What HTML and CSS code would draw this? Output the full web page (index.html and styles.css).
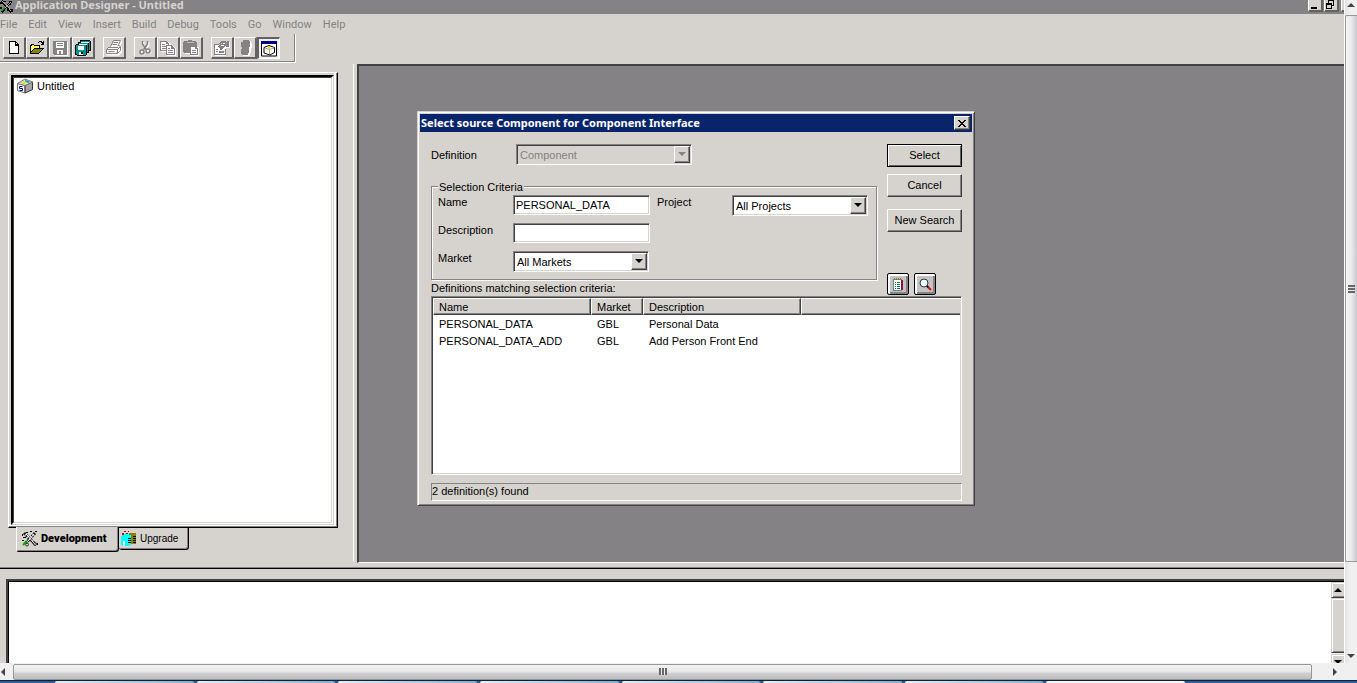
FILE: index.html
```html
<!DOCTYPE html>
<html lang="en">
<head>
    <meta charset="UTF-8">
    <meta name="viewport" content="width=device-width, initial-scale=1.0">
    <title>Application Designer - Untitled</title>
    <link rel="stylesheet" href="styles.css">
</head>
<body>
    <div class="app">
        <header class="titlebar">
            <svg class="app-icon" viewBox="0 0 16 14" width="13" height="14" shape-rendering="crispEdges">
                <path d="M0 1h3v2H0zM4 0h3v1H4zM11 0h4v2h-2v3h-2zM0 7h2v2H0zM1 11h3v2H1zM9 9h2v3H9zM13 10h3v3h-3z" fill="#000"/>
                <path d="M2 0L14 13M14 0L2 13" stroke="#000" stroke-width="3"/>
                <path d="M3 0L14 12M13 1L5 10" stroke="#d6d3ce" stroke-width="1"/>
                <path d="M2 12l4-4" stroke="#00a000" stroke-width="2"/>
            </svg>
            <h1>Application Designer - Untitled</h1>
            <div class="window-buttons">
                <button type="button" aria-label="Minimize"><svg viewBox="0 0 14 11" width="14" height="11" shape-rendering="crispEdges"><path d="M3 7h6v2H3z"/></svg></button>
                <button type="button" aria-label="Restore"><svg viewBox="0 0 14 11" width="14" height="11" shape-rendering="crispEdges"><path d="M4 0h6v6H8V5h1V1H5v2H4zM2 3h6v6H2zM3 5v3h4V5z" fill-rule="evenodd"/></svg></button>
                <button type="button" class="cut" aria-label="Close"></button>
            </div>
        </header>

        <nav class="menubar">
            <a href="#">File</a>
            <a href="#">Edit</a>
            <a href="#">View</a>
            <a href="#">Insert</a>
            <a href="#">Build</a>
            <a href="#">Debug</a>
            <a href="#">Tools</a>
            <a href="#">Go</a>
            <a href="#">Window</a>
            <a href="#">Help</a>
        </nav>

        <div class="toolbar">
            <div class="tool-group">
                <button type="button" aria-label="New"><svg viewBox="0 0 16 16" shape-rendering="crispEdges"><path d="M3 1h7v1h1v1h1v1h1v10H3z"/><path d="M4 2h5v4h3v7H4zM10 3h1v1h-1z" fill="#fff"/></svg></button>
                <button type="button" aria-label="Open"><svg viewBox="0 0 16 16" shape-rendering="crispEdges"><path d="M1 5h1V4h3v1h6v3h4v1h-1v1h-1v1h-1v1h-1v1h-1v1H1zM9 2h1V1h3v1h1V1h1v4h-3V4h1V3h-1V2h-2v1H9z"/><path d="M2 6h1V5h2v1h5v2H5v1H4v1H3v1H2z" fill="#ff6"/><path d="M5 9h8v1h-1v1h-1v1h-1v1H2v-1h1v-1h1v-1h1z" fill="#848200"/></svg></button>
                <button type="button" aria-label="Save" disabled><svg viewBox="0 0 16 16" shape-rendering="crispEdges"><path d="M2 2h14v14H3v-1H2z" fill="#fff"/><path d="M1 1h14v14H2v-1H1z" fill="#848284"/><path d="M4 2h8v6H4zM5 10h6v4H9v-3H7v3H5z" fill="#fff"/><path d="M5 3h6v1H5zM5 5h6v1H5z" fill="#848284"/></svg></button>
                <button type="button" aria-label="Save All"><svg viewBox="0 0 16 16" shape-rendering="crispEdges"><path d="M5 0h10v1h1v10h-2v2h-2v2h-1v1H2v-1H0V5h1V4h2V2h2z"/><path d="M6 1h9v9h-1V2H6zM4 3h9v9h-1V4H4zM1 5h10v10H2v-1H1z" fill="#009294"/><path d="M6 2h8v1H6zM4 4h8v1H4z" fill="#fff"/><path d="M3 6h6v4H3zM4 12h4v3H4z" fill="#fff"/><path d="M6 12h2v2H6z"/></svg></button>
            </div>
            <div class="tool-group">
                <button type="button" aria-label="Print" disabled><svg viewBox="0 0 16 16" fill="none"><path d="M5.500 7.500L8.500 1.500H15.500L13 7M3 8L1.500 10.500V14.500H12.500L15.500 11.500V7.500L12.500 6.500M1.500 10.500H12.500V14M12.500 10.500L15 8M3.500 12.500H9.500M8.500 3.500H13M7.500 5.500H12M3 8.500H12" stroke="#fff" stroke-width="2"/><path d="M4.500 6.500L7.500 .5H14.500L12 6M3 7L.5 9.500V13.500H11.500L14.500 10.500V6.500L12.500 5.500M.5 9.500H11.500V13M11.500 9.500L14 7M2.500 11.500H8.500M7.500 2.500H12M6.500 4.500H11M3 7.500H12" stroke="#848284"/></svg></button>
            </div>
            <div class="tool-group">
                <button type="button" aria-label="Cut" disabled><svg viewBox="0 0 16 16" fill="none"><path d="M6.500 2v3l4 6M11.500 2v3l-4 6" stroke="#fff" stroke-width="2"/><circle cx="6" cy="13" r="2" stroke="#fff"/><circle cx="12" cy="12" r="2" stroke="#fff"/><path d="M5.500 1v3l4 6M10.500 1v3l-4 6" stroke="#848284" stroke-width="1.500"/><circle cx="5" cy="12" r="2" stroke="#848284" stroke-width="1.500"/><circle cx="11" cy="11" r="2" stroke="#848284" stroke-width="1.500"/></svg></button>
                <button type="button" aria-label="Copy" disabled><svg viewBox="0 0 16 16" shape-rendering="crispEdges"><path d="M1 2h7l3 3v7H1zM7 6h6l3 3v7H7z" fill="#fff"/><path d="M0 1h6v1H1v8h5v1H0zM6 1h1v1h1v1h1v2H8V4H6zM2 4h3v1H2zM2 6h4v1H2zM2 8h4v1H2zM6 5h6v1H7v8h7V9h-3V5h1v1h1v1h1v1h1v7H6zM8 8h2v1H8zM8 10h5v1H8zM8 12h5v1H8z" fill="#848284"/></svg></button>
                <button type="button" aria-label="Paste" disabled><svg viewBox="0 0 16 16" shape-rendering="crispEdges"><path d="M2 3h12v4h2v9H7v-2H2z" fill="#fff"/><path d="M5 0h4v1h4v1h1v5H7v6H1V12H0V2h1V1h4z" fill="#848284"/><path d="M4 2h7v1H4z" fill="#bbb"/><path d="M7 6h6v1h1v1h1v7H7zM8 7v7h6V9h-2V7zM9 10h4v1H9zM9 12h4v1H9z" fill="#848284" fill-rule="evenodd"/></svg></button>
            </div>
            <div class="tool-group">
                <button type="button" aria-label="Properties" disabled><svg viewBox="0 0 16 16" shape-rendering="crispEdges"><path d="M1 5h11v11H1zM8 2h8v6H8z" fill="#fff"/><path d="M0 4h5v1H1v9h10V9h1v6H0zM5 3h1V2h1V1h5v1h1V1h2v6h-3V6h-1v1h-1v1H9v1H8v1H6V8H5V7H4V6h1V5h1V4H5zM7 3h1v1H7zM9 3h2v1H9zM7 5h3v1H7zM2 9h2v1H2zM2 11h2v1H2zM5 11h5v1H5zM5 13h5v-1H5z" fill="#848284" fill-rule="evenodd"/></svg></button>
                <button type="button" aria-label="Stop" disabled><svg viewBox="0 0 16 16" shape-rendering="crispEdges"><path d="M7 1h7v2h1v5h-1v5h-1v3H6v-2h1z" fill="#fff"/><path d="M6 0h6v1h1v6h-1v6h-1v2H5v-1H4V9h1V7H4V2h2z" fill="#848284"/></svg></button>
                <button type="button" class="pressed" aria-label="Project Workspace"><svg viewBox="0 0 16 16"><path d="M.5 .5h15v14.500H.5z" fill="#fff" stroke="#000"/><path d="M0 0h16v3H0z" fill="#000084"/><path d="M3 6.500l5-2 5.500 2v5L9 14l-6-2z" fill="#fff" stroke="#000"/><path d="M4 7l4.500 1.500L13 7M8.500 8.500V13" fill="none" stroke="#a5a5a5"/><path d="M7 5h2v3H7z" fill="#e7d700"/></svg></button>
            </div>
        </div>

        <main class="work">
            <aside class="project">
                <div class="tree">
                    <ul>
                        <li>
                            <svg viewBox="0 0 16 16" width="16" height="16"><path d="M.5 5.500L8 7.500V15L.5 12.500z" fill="#fff" stroke="#777"/><path d="M8 7.500l7.500-3.500v7.500L8 15z" fill="#a5a5a5" stroke="#333"/><path d="M.5 5.500L8 1l7.500 3L8 7.500z" fill="#dedfde" stroke="#777"/><path d="M4 5l4-2 2 1-4 2z" fill="#e7d700"/><path d="M8 2l3 1 2 1-2 1-3-2z" fill="#009a9c"/><path d="M2.500 8.500h3M2.500 8.500v2h3v2h-3" fill="none" stroke="#0000a5"/></svg>
                            <span>Untitled</span>
                        </li>
                    </ul>
                </div>
                <div class="tabs">
                    <button type="button" class="tab active">
                        <svg viewBox="0 0 16 16" width="16" height="16"><path d="M0 3h1v2H0zM4 1h2v1H4zM8 0h2v1H8zM13 0h2v1h-2zM0 9h2v1H0zM9 9h1v2H9zM15 12h1v2h-1zM1 6h3v1H1z" fill="#000"/><path d="M2 2l11 11M13 2L3 13" stroke="#222" stroke-width="3" stroke-dasharray="2 1"/><path d="M4 3l9 10M12 3L5 11" stroke="#fff" stroke-width="1"/><circle cx="5" cy="13.500" r="1.500" fill="none" stroke="#333"/><circle cx="13" cy="13" r="1.500" fill="none" stroke="#333"/><path d="M1 14l4-4" stroke="#00a500" stroke-width="2"/></svg>
                        Development
                    </button>
                    <button type="button" class="tab">
                        <svg viewBox="0 0 16 16" width="16" height="16" shape-rendering="crispEdges"><path d="M8 2h7v11H8z" fill="#848200"/><path d="M12 5h3v1h-3zM12 7h3v1h-3zM12 9h3v1h-3zM12 11h3v1h-3z" fill="#000"/><path d="M1 4h2V3h5v1h2v10H8v1H1v-1H0V5h1z" fill="#0ff"/><path d="M7 7h3v1H7zM7 9h3v1H7zM7 11h3v1H7z" fill="#000"/><path d="M2 10h2v5H2z" fill="#fff"/><path d="M1 2h2v2H1zM3 0h2v1H3zM5 2h2v1H5zM7 0h1v1H7z" fill="#c00020"/></svg>
                        Upgrade
                    </button>
                </div>
            </aside>

            <section class="desktop">
                <div class="dialog" role="dialog" aria-labelledby="dialog-title">
                    <div class="dialog-title">
                        <h2 id="dialog-title">Select source Component for Component Interface</h2>
                        <button type="button" aria-label="Close"><svg viewBox="0 0 8 7" width="8" height="7" shape-rendering="crispEdges"><path d="M0 0h2v1h1v1h2V1h1V0h2v1H7v1H6v1H5v1h1v1h1v1h1v1H6V6H5V5H3v1H2v1H0V6h1V5h1V4h1V3H2V2H1V1H0z"/></svg></button>
                    </div>
                    <form class="dialog-body">
                        <div class="dialog-top">
                            <div class="criteria">
                                <div class="definition">
                                    <label for="definition">Definition</label>
                                    <span class="combo disabled">
                                        <select id="definition" disabled><option>Component</option></select>
                                        <i></i>
                                    </span>
                                </div>
                                <fieldset>
                                    <legend>Selection Criteria</legend>
                                    <label for="name">Name</label>
                                    <input type="text" id="name" name="name" value="PERSONAL_DATA">
                                    <label for="project" class="second">Project</label>
                                    <span class="combo">
                                        <select id="project"><option>All Projects</option></select>
                                        <i></i>
                                    </span>
                                    <label for="description" class="first">Description</label>
                                    <input type="text" id="description" name="description">
                                    <label for="market" class="first">Market</label>
                                    <span class="combo">
                                        <select id="market"><option>All Markets</option></select>
                                        <i></i>
                                    </span>
                                </fieldset>
                                <p>Definitions matching selection criteria:</p>
                            </div>
                            <div class="actions">
                                <button type="button" class="default">Select</button>
                                <button type="button">Cancel</button>
                                <button type="button" class="search">New Search</button>
                                <div class="view-buttons">
                                    <button type="button" aria-label="List"><svg viewBox="0 0 12 13" width="12" height="13" shape-rendering="crispEdges"><path d="M1 1h9v12H1z" fill="#738284"/><path d="M2 2h7v10H2z" fill="#fff"/><path d="M9 2h2v10H9z" fill="#8c1042"/><path d="M2 0h1v2H2zM4 0h1v2H4zM6 0h1v2H6zM8 0h1v2H8z" fill="#848200"/><path d="M3 4h1v1H3zM5 4h3v1H5zM3 6h1v1H3zM5 6h3v1H5zM3 8h1v1H3zM5 8h3v1H5zM3 10h1v1H3zM5 10h3v1H5z" fill="#008242"/></svg></button>
                                    <button type="button" aria-label="View"><svg viewBox="0 0 13 13" width="13" height="13"><circle cx="5" cy="5" r="4" fill="#e7ffff" stroke="#333"/><path d="M8 8l1.500 1.500" stroke="#000" stroke-width="2"/><path d="M9 9l3 3" stroke="#d01000" stroke-width="2"/></svg></button>
                                </div>
                            </div>
                        </div>
                        <div class="results">
                            <table>
                                <thead>
                                    <tr><th class="col-name">Name</th><th class="col-market">Market</th><th class="col-desc">Description</th><th class="col-rest"></th></tr>
                                </thead>
                                <tbody>
                                    <tr><td>PERSONAL_DATA</td><td>GBL</td><td>Personal Data</td><td></td></tr>
                                    <tr><td>PERSONAL_DATA_ADD</td><td>GBL</td><td>Add Person Front End</td><td></td></tr>
                                </tbody>
                            </table>
                        </div>
                        <div class="status">2 definition(s) found</div>
                    </form>
                </div>
            </section>
        </main>

        <section class="output">
            <div class="output-text"></div>
            <div class="output-scroll">
                <button type="button" class="up" aria-label="Scroll up"></button>
                <div class="output-thumb"></div>
                <button type="button" class="down" aria-label="Scroll down"></button>
            </div>
        </section>
    </div>

    <div class="vscroll">
        <span class="arrow arrow-up"></span>
        <div class="vthumb"><span class="grip"></span></div>
        <span class="arrow arrow-down"></span>
    </div>
    <div class="hscroll">
        <span class="arrow arrow-left"></span>
        <div class="hthumb"><span class="grip"></span></div>
        <span class="arrow arrow-right"></span>
    </div>
    <div class="corner"></div>
    <footer class="taskbar">
        <span></span><span></span><span></span><span></span><span></span><span></span><span></span><span></span>
    </footer>
</body>
</html>
```
FILE: styles.css
```css
* { box-sizing: border-box; }
body { margin: 0; height: 100vh; display: grid; grid-template-columns: 1fr 13px; grid-template-rows: 1fr 17px 3px; overflow: hidden; background: #d6d3ce; color: #000; font: 11px/14px "Liberation Sans", Arial, sans-serif; }
button, input, select { font: inherit; color: inherit; margin: 0; padding: 0; border-radius: 0; }
h1, h2, p, ul { margin: 0; padding: 0; font-size: 11px; }
svg { display: block; }

.app { display: flex; flex-direction: column; min-width: 0; min-height: 0; overflow: hidden; }

/* title bar */
.titlebar { flex: none; height: 14px; display: flex; gap: 2px; background: #848284; color: #d6d3ce; }
.titlebar h1 { flex: 1; font: bold 11px/10px "Noto Sans", Tahoma, sans-serif; }
.window-buttons { display: flex; gap: 1px; }
.window-buttons button { width: 15px; height: 12px; background: #d6d3ce; border: solid; border-width: 0 2px 2px 1px; border-color: #fff #636163 #636163 #fff; }
.window-buttons svg { margin-left: -1px; }
.window-buttons .cut { width: 3px; margin-left: 1px; border-right: 0; }

/* menu and toolbar */
.menubar { flex: none; height: 20px; display: flex; gap: 11px; padding-top: 4px; }
.menubar a { color: #848284; text-decoration: none; font: 11px/14px Roboto, Tahoma, sans-serif; }
.toolbar { flex: none; width: 296px; height: 29px; display: flex; gap: 8px; padding: 3px 0 0 3px; margin-bottom: 1px; border-right: 1px solid #fff; border-bottom: 1px solid #fff; box-shadow: inset -1px -1px #848284; }
.tool-group { display: flex; }
.tool-group button { width: 23px; height: 22px; display: flex; align-items: center; justify-content: center; background: #d6d3ce; border: solid; border-width: 1px 2px 2px 1px; border-color: #fff #636163 #636163 #fff; }
.tool-group svg { width: 16px; height: 16px; }
.tool-group .pressed { border-width: 2px 1px 1px 2px; border-color: #636163 #fff #fff #636163; background: #efefef; }

/* project workspace */
.work { flex: 1; min-height: 0; display: flex; border-bottom: 1px solid #848284; }
.project { flex: none; width: 354px; display: flex; flex-direction: column; padding: 8px 15px 9px 8px; margin-bottom: 6px; border-right: 1px solid #fff; }
.tree { flex: 1; padding: 2px 3px 2px 2px; border: 1px solid; border-color: #fff #000 #000 #fff; box-shadow: inset -1px -1px #848284, inset -3px -3px #fff; }
.tree ul { height: 100%; padding: 0 2px 0 3px; list-style: none; background: #fff; border: 3px groove #424142; border-right: 3px double #d6d3ce; border-bottom: 3px double #d6d3ce; }
.tree li { display: flex; align-items: center; gap: 4px; }
.tabs { flex: none; height: 24px; display: flex; align-items: flex-start; padding-left: 8px; }
.tab { display: flex; align-items: center; gap: 3px; height: 22px; padding: 0 0 0 2px; width: 70px; background: #d6d3ce; border: 0 solid #000; border-width: 0 1px 1px 0; border-radius: 0 0 3px 3px; box-shadow: inset -1px -1px #848284; font-size: 10px; }
.tab.active { position: relative; width: 103px; height: 25px; margin-top: -1px; padding-left: 5px; font: 900 11px/14px Roboto, Arial, sans-serif; border-left: 1px solid #fff; }

/* desktop area */
.desktop { flex: 1; position: relative; margin: 0 0 4px 3px; background: #848284; border: solid; border-width: 2px 0 1px 2px; border-color: #424142 #fff #fff #424142; }
.dialog { position: absolute; left: 58px; top: 45px; width: 558px; background: #d6d3ce; border: 1px solid; border-color: #d6d3ce #424142 #424142 #d6d3ce; box-shadow: inset 1px 1px #fff, inset -1px -1px #848284; padding: 2px; }
.dialog-title { height: 18px; display: flex; align-items: center; justify-content: space-between; padding: 0 2px 0 1px; background: #08246b; color: #fff; }
.dialog-title h2 { font: bold 11px/14px "Noto Sans", Tahoma, sans-serif; }
.dialog-title button { width: 16px; height: 14px; display: flex; align-items: center; justify-content: center; background: #d6d3ce; border: 1px solid; border-color: #fff #424142 #424142 #fff; box-shadow: inset -1px -1px #848284; }
.dialog-body { padding: 12px 10px 2px 11px; }
.dialog-top { display: flex; gap: 10px; }
.criteria { flex: 1; }
.definition { display: flex; align-items: center; }
.definition label { width: 85px; }
.definition .combo { width: 176px; }

input[type="text"] { width: 100%; height: 20px; padding: 0 2px; background: #fff; border: 1px solid; border-color: #848284 #fff #fff #848284; box-shadow: inset 1px 1px #424142, inset -1px -1px #d6d3ce; outline: 0; }
.combo { position: relative; display: block; height: 21px; }
.combo select { width: 100%; height: 21px; padding: 0 3px; appearance: none; background: #fff; border: 1px solid; border-color: #848284 #fff #fff #848284; box-shadow: inset 1px 1px #424142, inset -1px -1px #d6d3ce; opacity: 1; }
.combo i { position: absolute; right: 2px; top: 2px; width: 16px; height: 17px; background: #d6d3ce; border: 1px solid; border-color: #fff #424142 #424142 #fff; box-shadow: inset -1px -1px #848284; pointer-events: none; }
.combo i::after { content: ""; position: absolute; left: 3px; top: 5px; border: 4px solid transparent; border-top-color: #000; border-bottom: 0; }
.combo.disabled select { background: #d6d3ce; color: #848284; }
.combo.disabled i::after { border-top-color: #848284; }

fieldset { display: grid; grid-template-columns: 75px 137px 82px 136px; grid-template-rows: 28px 28px 21px; align-items: start; margin: 13px 0 0; padding: 1px 8px 7px 6px; border: 1px solid #848284; box-shadow: 1px 1px #fff, inset 1px 1px #fff; min-width: 0; }
legend { padding: 2px 1px 0; background: #d6d3ce; }
fieldset .first { grid-column: 1; }
fieldset .second { padding-left: 7px; }
fieldset .combo { width: 136px; }
.criteria p { padding-top: 1px; }

.actions { width: 75px; display: flex; flex-direction: column; }
.actions button { height: 23px; margin-bottom: 7px; padding-bottom: 2px; background: #d6d3ce; border: 1px solid; border-color: #fff #424142 #424142 #fff; box-shadow: inset -1px -1px #848284; }
.actions .default { border-color: #000; box-shadow: inset 1px 1px #fff, inset -1px -1px #636163; }
.actions .search { margin: 5px 0 0; }
.view-buttons { display: flex; gap: 5px; margin-top: 41px; }
.actions .view-buttons button { width: 22px; height: 22px; margin: 0; padding: 0; display: flex; align-items: center; justify-content: center; border-color: #000; border-radius: 2px; background: #c6c3c6; box-shadow: inset 2px 2px #fff, inset -2px -2px #848284; }

.results { height: 179px; margin-top: 1px; background: #fff; border: 1px solid; border-color: #848284 #fff #fff #848284; box-shadow: inset 1px 1px #424142, inset -1px -1px #d6d3ce; padding: 1px; }
.results table { width: 100%; table-layout: fixed; border-collapse: separate; border-spacing: 0; }
.results th { height: 17px; padding: 0 5px; font-weight: normal; text-align: left; background: #d6d3ce; border: 1px solid; border-color: #fff #424142 #424142 #fff; box-shadow: inset -1px -1px #848284; }
.results td { height: 17px; padding: 0 6px; white-space: nowrap; }
.results .col-rest { border-right: 0; box-shadow: inset 0 -1px #848284; }
.col-name { width: 158px; }
.col-market { width: 52px; }
.col-desc { width: 158px; }
.status { height: 18px; margin-top: 8px; border: 1px solid; border-color: #848284 #fff #fff #848284; line-height: 15px; }

/* output window */
.output { flex: none; height: 95px; display: flex; padding: 10px 0 0 6px; border-top: 1px solid #000; }
.output-text { flex: 1; background: #fff; border: 3px ridge #424142; border-width: 3px 0 0 3px; }
.output-scroll { flex: none; width: 13px; display: flex; flex-direction: column; border-top: 3px ridge #424142; background: #efefef; overflow: hidden; }
.output-scroll button, .output-thumb { flex: none; width: 16px; height: 16px; background: #d6d3ce; border: 1px solid; border-color: #d6d3ce #424142 #424142 #d6d3ce; box-shadow: inset 1px 1px #fff, inset -1px -1px #848284; }
.output-thumb { height: 55px; }
.output-scroll button::after { content: ""; display: block; width: 0; margin-left: 2px; border: 4px solid transparent; }
.output-scroll .up::after { border-bottom-color: #000; border-top: 0; }
.output-scroll .down::after { border-top-color: #000; border-bottom: 0; }
.output-scroll .down { margin-top: 1px; }

/* outer scroll bars */
.vscroll { display: flex; flex-direction: column; align-items: center; padding: 0 0 5px; background: linear-gradient(90deg, #e3e3e3, #f0f0f0 5px); border-left: 1px solid #fff; overflow: hidden; }
.hscroll { display: flex; align-items: center; padding-left: 1px; background: #f0f0f0; overflow: hidden; }
.arrow { flex: none; width: 0; height: 0; border: 4px solid transparent; }
.arrow-up { margin-top: 3px; margin-bottom: 8px; border-top: 0; border-bottom-color: #444; }
.arrow-down { border-bottom: 0; border-top-color: #444; margin-top: auto; }
.arrow-left { border-left: 0; border-right-color: #444; margin-right: 8px; }
.arrow-right { border-right: 0; border-left-color: #444; margin: 0 7px 0 21px; }
.vthumb { flex: 0 1 547px; align-self: stretch; display: flex; align-items: center; justify-content: center; background: linear-gradient(90deg, #f5f5f5, #e9e9eb 6px, #c8c8cc 11px); border: 1px solid #979797; border-right: 0; border-radius: 2px 0 0 2px; }
.vthumb .grip { width: 7px; height: 8px; background: repeating-linear-gradient(#666 0 2px, transparent 2px 3px); }
.hthumb { flex: 1; height: 16px; display: flex; align-items: center; justify-content: center; background: linear-gradient(#f3f3f3, #e6e6e6 7px, #d0d0d2 8px, #bcbcbe); border: 1px solid #979797; border-radius: 2px; }
.hthumb .grip { width: 8px; height: 7px; background: repeating-linear-gradient(90deg, #666 0 2px, #eee 2px 3px); }
.corner { background: #f0f0f0; }

.taskbar { grid-column: 1 / 3; display: flex; gap: 3px; padding: 0 172px 0 55px; background: #2c5f94; border-top: 1px solid #10202e; }
.taskbar span { flex: 1; background: linear-gradient(90deg, #e3f1fa, #7fb0d6); border-radius: 2px 2px 0 0; }
.taskbar span:last-child { background: #f4f8fc; }
```
